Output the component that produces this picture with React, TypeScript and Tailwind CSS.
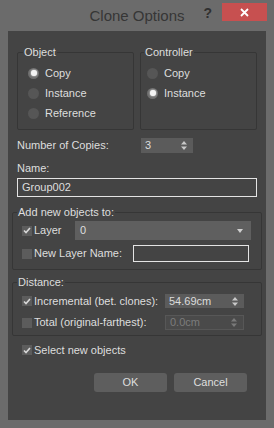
import React from 'react';

const font = { fontFamily: '"Liberation Sans", Arial, sans-serif' };

const Radio: React.FC<{ on?: boolean; label: string }> = ({ on, label }) => (
    <div className="flex items-center h-[20px]">
        <span className={`w-[11px] h-[11px] rounded-full flex items-center justify-center ${on ? 'bg-[#6e6e6e]' : 'bg-[#565656]'}`}>
            {on && <span className="w-[6px] h-[6px] rounded-full bg-[#f2f2f2] shadow-[0_0_2px_#ffffff]"></span>}
        </span>
        <span className="ml-[6px]">{label}</span>
    </div>
);

const Check: React.FC<{ on?: boolean }> = ({ on }) => (
    <span className="w-[10px] h-[10px] bg-[#5c5c5c] flex items-center justify-center shrink-0">
        {on && (
            <svg width="8" height="7" viewBox="0 0 8 7">
                <path d="M1 3.5 L3 5.5 L7 1" fill="none" stroke="#d8d8d8" strokeWidth="1.6" />
            </svg>
        )}
    </span>
);

const Arrows: React.FC<{ dim?: boolean }> = ({ dim }) => (
    <svg width="6" height="9" viewBox="0 0 6 9" className="ml-auto">
        <path d="M3 0 L6 3.5 L0 3.5 Z M0 5.5 L6 5.5 L3 9 Z" fill={dim ? '#7a7a7a' : '#c8c8c8'} />
    </svg>
);

const Spinner: React.FC<{ value: string; dim?: boolean; className: string }> = ({ value, dim, className }) => (
    <div className={`flex items-center pl-[4px] pr-[6px] ${dim ? 'bg-[#4a4a4a] border border-[#575757] text-[#7c7c7c]' : 'bg-[#5b5b5b] text-[#dcdcdc]'} ${className}`}>
        <span>{value}</span>
        <Arrows dim={dim} />
    </div>
);

export default function App() {
    return (
        <div className="w-[274px] h-[428px] bg-[#6b6b6b] flex flex-col px-[8px] pb-[8px] text-[11px] text-[#dedede]" style={font}>
            {/* Title bar */}
            <div className="h-[31px] -mx-[8px] grid grid-cols-[1fr_auto_1fr]">
                <div></div>
                <div className="text-[15px] text-[#363636] pt-[6px] leading-[20px]">Clone Options</div>
                <div className="flex items-start justify-end pr-[7px] pt-[3px]">
                    <span className="text-[14px] font-bold text-[#303030] leading-[18px] mt-[1px]">?</span>
                    <div className="ml-[10px] w-[45px] h-[18px] bg-[#c75050] flex items-center justify-center">
                        <svg width="9" height="9" viewBox="0 0 9 9">
                            <path d="M1 1 L8 8 M8 1 L1 8" stroke="#ffffff" strokeWidth="1.8" />
                        </svg>
                    </div>
                </div>
            </div>

            {/* Content */}
            <div className="flex-1 bg-[#444444] flex flex-col pt-[14px]">
                <div className="flex px-[9px] gap-[6px]">
                    <fieldset className="w-[117px] h-[85px] border border-[#363636] rounded-[2px]">
                        <legend className="ml-[5px] px-[1px] leading-[14px]">Object</legend>
                        <div className="pl-[10px] pt-[4px]">
                            <Radio on label="Copy" />
                            <Radio label="Instance" />
                            <Radio label="Reference" />
                        </div>
                    </fieldset>
                    <fieldset className="w-[117px] h-[85px] border border-[#363636] rounded-[2px]">
                        <legend className="ml-[3px] px-[1px] leading-[14px]">Controller</legend>
                        <div className="pl-[6px] pt-[4px]">
                            <Radio label="Copy" />
                            <Radio on label="Instance" />
                        </div>
                    </fieldset>
                </div>

                <div className="flex items-center px-[9px] mt-[8px] h-[15px]">
                    <span className="w-[124px]">Number of Copies:</span>
                    <Spinner value="3" className="w-[52px] h-[15px]" />
                </div>

                <div className="px-[9px] mt-[9px] leading-[13px]">Name:</div>
                <div className="mx-[9px] mt-[3px] h-[19px] border border-[#e4e4e4] flex items-center pl-[4px]">Group002</div>

                <fieldset className="mx-[4px] mt-[8px] h-[65px] border border-[#363636] rounded-[2px]">
                    <legend className="ml-[4px] px-[1px] leading-[14px]">Add new objects to:</legend>
                    <div className="flex items-center pl-[9px] mt-[2px] h-[19px]">
                        <Check on />
                        <span className="ml-[2px] w-[41px]">Layer</span>
                        <div className="w-[176px] h-[19px] bg-[#5f5f5f] flex items-center pl-[5px] pr-[8px]">
                            <span>0</span>
                            <svg width="6" height="4" viewBox="0 0 6 4" className="ml-auto">
                                <path d="M0 0 L6 0 L3 4 Z" fill="#cfcfcf" />
                            </svg>
                        </div>
                    </div>
                    <div className="flex items-center pl-[9px] mt-[5px] h-[17px]">
                        <Check />
                        <span className="ml-[2px] w-[99px]">New Layer Name:</span>
                        <div className="w-[116px] h-[17px] border border-[#e4e4e4]"></div>
                    </div>
                </fieldset>

                <fieldset className="mx-[4px] mt-[5px] h-[61px] border border-[#363636] rounded-[2px]">
                    <legend className="ml-[4px] px-[1px] leading-[14px]">Distance:</legend>
                    <div className="flex items-center pl-[9px] mt-[5px] h-[14px]">
                        <Check on />
                        <span className="ml-[2px] w-[131px]">Incremental (bet. clones):</span>
                        <Spinner value="54.69cm" className="w-[79px] h-[14px]" />
                    </div>
                    <div className="flex items-center pl-[9px] mt-[7px] h-[15px]">
                        <Check />
                        <span className="ml-[2px] w-[131px]">Total (original-farthest):</span>
                        <Spinner value="0.0cm" dim className="w-[79px] h-[15px]" />
                    </div>
                </fieldset>

                <div className="flex items-center pl-[14px] mt-[8px] h-[12px]">
                    <Check on />
                    <span className="ml-[2px]">Select new objects</span>
                </div>

                <div className="flex justify-end gap-[7px] pr-[19px] mt-[17px]">
                    <button className="w-[73px] h-[19px] rounded-[3px] bg-[#5e5e5e] text-[#dedede]">OK</button>
                    <button className="w-[73px] h-[19px] rounded-[3px] bg-[#5e5e5e] text-[#dedede]">Cancel</button>
                </div>
            </div>
        </div>
    );
}
